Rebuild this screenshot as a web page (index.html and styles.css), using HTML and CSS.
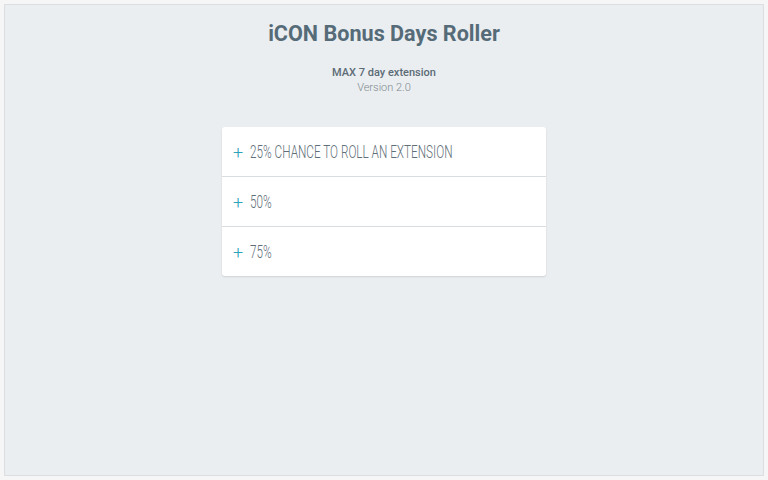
FILE: index.html
```html
<!DOCTYPE html>
<html>
<head>
<meta charset="utf-8">
<link rel="stylesheet" href="styles.css">
</head>
<body>
<div class="frame">
  <h1 class="title">iCON Bonus Days Roller</h1>
  <div class="sub">
    <div class="sub-main">MAX 7 day extension</div>
    <div class="sub-ver">Version 2.0</div>
  </div>
  <div class="card">
    <div class="row"><span class="plus">+</span><span class="label">25% CHANCE TO ROLL AN EXTENSION</span></div>
    <div class="row"><span class="plus">+</span><span class="label">50%</span></div>
    <div class="row"><span class="plus">+</span><span class="label">75%</span></div>
  </div>
</div>
</body>
</html>
```
FILE: styles.css
```css
html, body { margin: 0; padding: 0; }
body {
  background: #f6f6f6;
  width: 768px;
  height: 480px;
  padding: 4px;
  box-sizing: border-box;
  font-family: Roboto, "Liberation Sans", sans-serif;
}
.frame {
  height: 472px;
  box-sizing: border-box;
  background: #eaeef1;
  border: 1px solid #dcdfe2;
  display: flex;
  flex-direction: column;
  align-items: center;
}
.title {
  margin: 16px 0 0;
  font-size: 21.6px;
  font-weight: 700;
  color: #566b78;
  line-height: 26px;
}
.sub {
  margin-top: 18px;
  text-align: center;
  font-size: 11px;
  line-height: 15px;
}
.sub-main { font-weight: 500; color: #5c6b75; }
.sub-ver { font-weight: 300; color: #80898f; }
.card {
  margin-top: 32px;
  width: 324px;
  background: #fff;
  border-radius: 3px;
  box-shadow: 0 1px 2px rgba(0,0,0,0.12);
}
.row {
  height: 50px;
  display: flex;
  align-items: center;
  padding-left: 11px;
  border-top: 1px solid #dadde0;
  box-sizing: border-box;
  overflow: hidden;
}
.row:first-child { border-top: none; height: 49px; }
.plus {
  flex: none;
  color: #2aa3b8;
  font-size: 18px;
  font-weight: 300;
  width: 17px;
  line-height: 1;
  margin-top: 2px;
}
.label {
  flex: none;
  display: inline-block;
  font-size: 18.5px;
  font-weight: 300;
  color: #5f6f79;
  transform: scaleX(0.635);
  transform-origin: left center;
  white-space: nowrap;
}
```
